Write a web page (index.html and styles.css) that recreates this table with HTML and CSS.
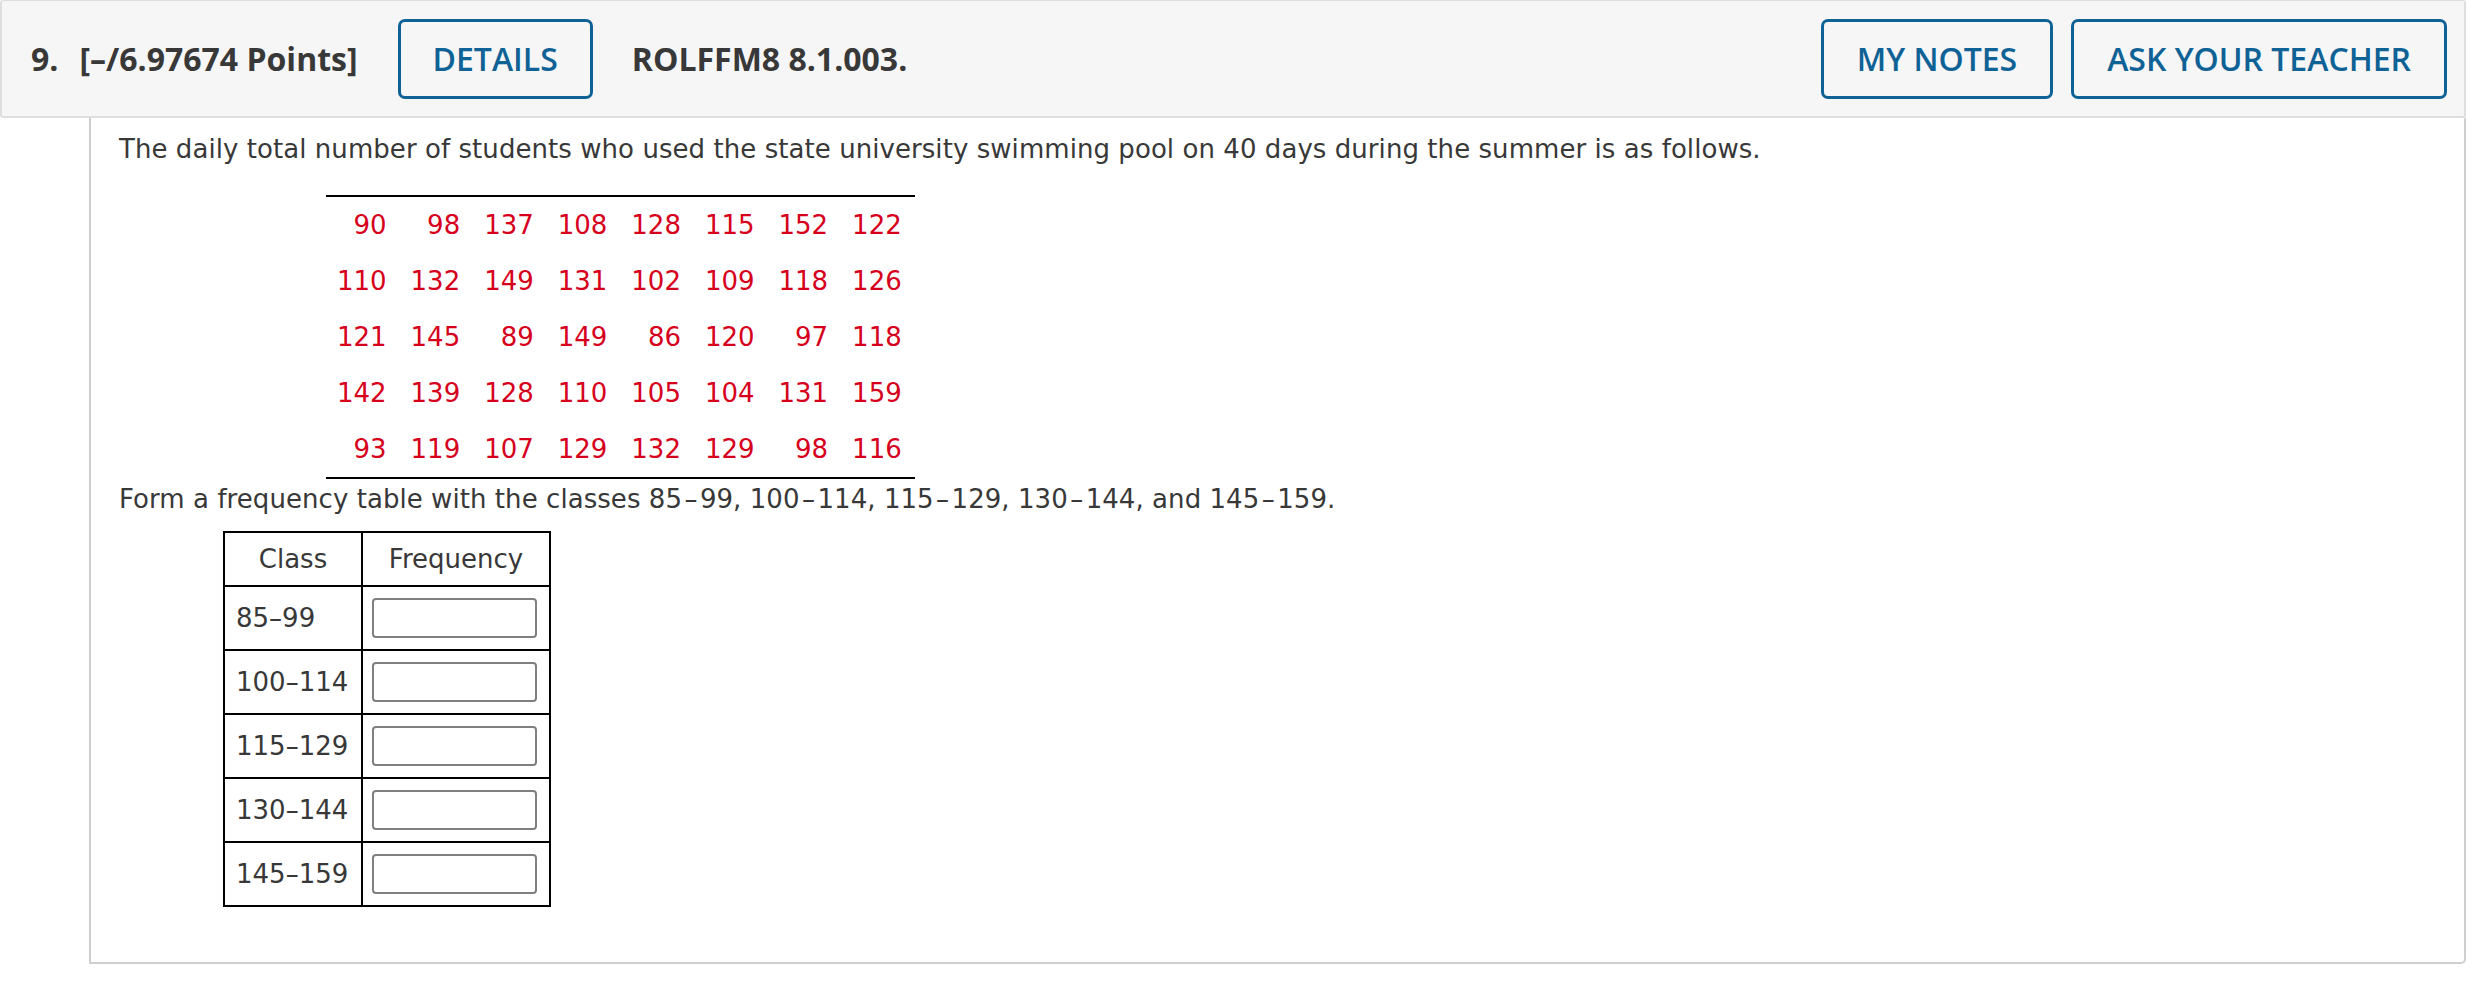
FILE: index.html
```html
<!DOCTYPE html>
<html lang="en">
<head>
<meta charset="utf-8">
<title>Question 9</title>
<link rel="stylesheet" href="styles.css">
</head>
<body>
<div class="page">
  <div class="qhead">
    <span class="qnum">9.</span>
    <span class="qpoints">[–/6.97674 Points]</span>
    <button class="btn btn-details">DETAILS</button>
    <span class="qcode">ROLFFM8 8.1.003.</span>
    <div class="qactions">
      <button class="btn">MY NOTES</button>
      <button class="btn">ASK YOUR TEACHER</button>
    </div>
  </div>
  <div class="qbody">
    <p class="txt">The daily total number of students who used the state university swimming pool on 40 days during the summer is as follows.</p>
    <table class="data">
      <tr><td>90</td><td>98</td><td>137</td><td>108</td><td>128</td><td>115</td><td>152</td><td>122</td></tr>
      <tr><td>110</td><td>132</td><td>149</td><td>131</td><td>102</td><td>109</td><td>118</td><td>126</td></tr>
      <tr><td>121</td><td>145</td><td>89</td><td>149</td><td>86</td><td>120</td><td>97</td><td>118</td></tr>
      <tr><td>142</td><td>139</td><td>128</td><td>110</td><td>105</td><td>104</td><td>131</td><td>159</td></tr>
      <tr><td>93</td><td>119</td><td>107</td><td>129</td><td>132</td><td>129</td><td>98</td><td>116</td></tr>
    </table>
    <p class="txt">Form a frequency table with the classes 85<span class="dash">–</span>99, 100<span class="dash">–</span>114, 115<span class="dash">–</span>129, 130<span class="dash">–</span>144, and 145<span class="dash">–</span>159.</p>
    <table class="freq">
      <tr><th class="c1">Class</th><th class="c2">Frequency</th></tr>
      <tr><td class="c1">85<span class="dash">–</span>99</td><td class="c2"><input type="text" class="ans"></td></tr>
      <tr><td class="c1">100<span class="dash">–</span>114</td><td class="c2"><input type="text" class="ans"></td></tr>
      <tr><td class="c1">115<span class="dash">–</span>129</td><td class="c2"><input type="text" class="ans"></td></tr>
      <tr><td class="c1">130<span class="dash">–</span>144</td><td class="c2"><input type="text" class="ans"></td></tr>
      <tr><td class="c1">145<span class="dash">–</span>159</td><td class="c2"><input type="text" class="ans"></td></tr>
    </table>
  </div>
</div>
</body>
</html>
```

FILE: styles.css
```css
html, body {
  margin: 0;
  padding: 0;
  background: #fff;
}
.page {
  width: 2466px;
}
.qhead {
  box-sizing: border-box;
  height: 118px;
  display: flex;
  align-items: center;
  background: #f6f6f6;
  border: 2px solid #dedede;
  border-top-width: 1px;
  border-radius: 3px;
  padding: 0 17px 0 29px;
  font-family: "Open Sans", "Liberation Sans", sans-serif;
  font-size: 32px;
  color: #383838;
}
.qnum {
  font-weight: 700;
  margin-right: 21px;
}
.qpoints {
  font-weight: 700;
  margin-right: 40px;
}
.qcode {
  font-weight: 700;
  margin-left: 39px;
}
.qactions {
  margin-left: auto;
  display: flex;
  gap: 18px;
}
.btn {
  box-sizing: border-box;
  height: 80px;
  padding: 0 33px;
  background: transparent;
  border: 3px solid #0f6295;
  border-radius: 7px;
  color: #0f6295;
  font-family: "Open Sans", "Liberation Sans", sans-serif;
  font-size: 32px;
  font-weight: 600;
  line-height: 1;
}
.btn-details {
  padding: 0 32px;
}
.qbody {
  box-sizing: border-box;
  margin-left: 89px;
  border: 2px solid #cfcfcf;
  border-top: none;
  border-radius: 0 0 5px 0;
  padding: 12px 28px 55px 28px;
  font-family: "DejaVu Sans", Verdana, sans-serif;
  font-size: 26px;
  color: #383838;
}
.txt {
  margin: 0;
  line-height: 39px;
  letter-spacing: 0.06px;
}
.dash {
  padding: 0 2.4px;
}
.data {
  border-collapse: collapse;
  margin: 26px 0 1px 207px;
  border-top: 2px solid #000;
  border-bottom: 2px solid #000;
}
.data td {
  width: 60.6px;
  height: 56px;
  padding: 0 13px 0 0;
  text-align: right;
  color: #d6001c;
  line-height: 56px;
}
.freq {
  border-collapse: collapse;
  margin: 12px 0 0 104px;
}
.freq th,
.freq td {
  border: 2px solid #000;
  padding: 0;
  font-weight: 400;
}
.freq th {
  height: 52px;
  text-align: center;
}
.freq td {
  height: 62px;
}
.freq .c1 {
  width: 125px;
  padding-left: 11px;
  text-align: left;
}
.freq .c1 .dash {
  padding: 0;
}
.freq th.c1 {
  padding-left: 0;
  text-align: center;
  width: 136px;
}
.freq .c2 {
  width: 167px;
  padding: 0 10px 0 9px;
}
.freq th.c2 {
  padding: 0;
  width: 186px;
}
.ans {
  display: block;
  box-sizing: border-box;
  width: 165px;
  height: 40px;
  margin: 0;
  border: 2px solid #808080;
  border-radius: 4px;
  background: #fff;
}
```
